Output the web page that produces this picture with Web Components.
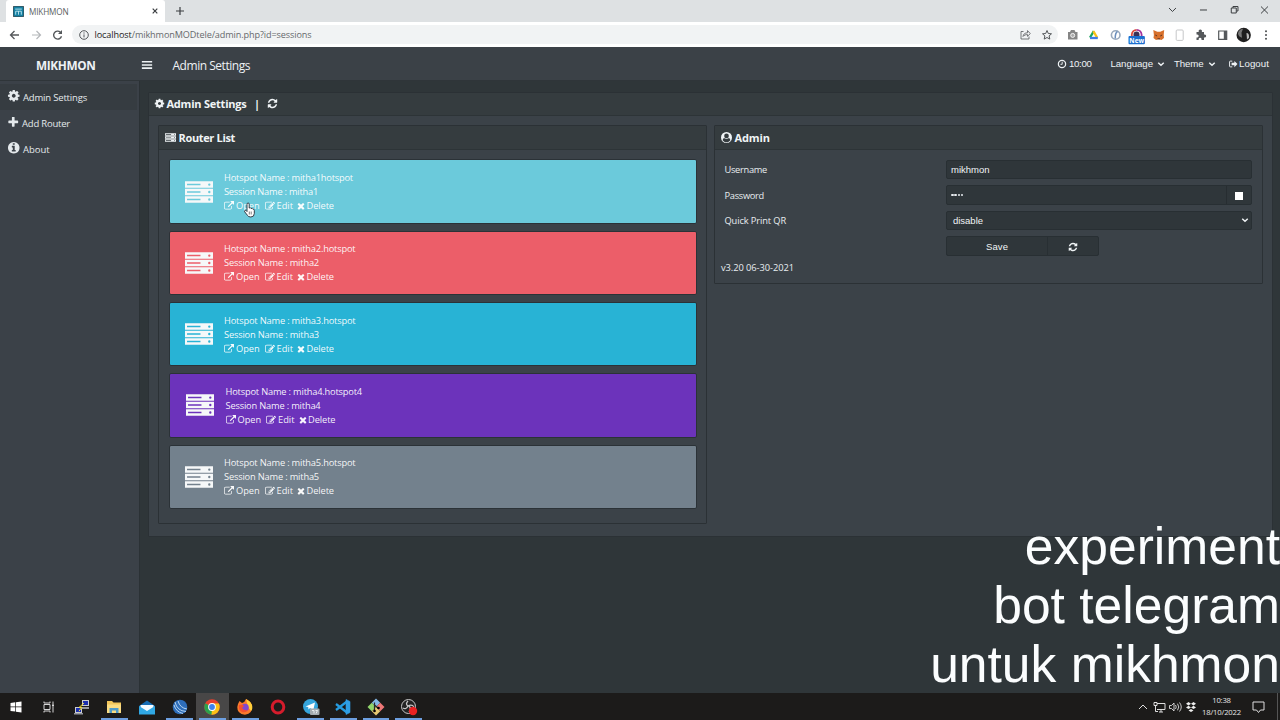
<!DOCTYPE html>
<html lang="en">
<head>
<meta charset="utf-8">
<title>MIKHMON</title>
<style>
  html, body {
    margin: 0;
    width: 1280px;
    height: 720px;
    overflow: hidden;
  }
  body {
    background: #2f3639;
    font-family: "Open Sans", "Noto Sans", sans-serif;
  }
</style>
</head>
<body>
<desktop-screen></desktop-screen>

<script>
const define = (name, html, setup) => {
  const template = document.createElement('template')
  template.innerHTML = html
  window.customElements.define(name, class extends HTMLElement {
    constructor() {
      super()
      this.attachShadow({ mode: 'open' })
      this.shadowRoot.appendChild(template.content.cloneNode(true))
      if (setup) setup.call(this, this.shadowRoot)
    }
  })
}

const icons = {
  bars: '<path d="M128 290h1536v250H128zM128 770h1536v250H128zM128 1250h1536v250H128z"/>',
  cog: '<path d="M1152 896q0-106-75-181t-181-75-181 75-75 181 75 181 181 75 181-75 75-181zm512-109v222q0 12-8 23t-20 13l-185 28q-19 54-39 91 35 50 107 138 10 12 10 25t-9 23q-27 37-99 108t-94 71q-12 0-26-9l-138-108q-44 23-91 38-16 136-29 186-7 28-36 28h-222q-14 0-24.5-8.5t-11.5-21.5l-28-184q-49-16-90-37l-141 107q-10 9-25 9-14 0-25-11-126-114-165-168-7-10-7-23 0-12 8-23 15-21 51-66.5t54-70.5q-27-50-41-99l-183-27q-13-2-21-12.5t-8-23.5v-222q0-12 8-23t19-13l186-28q14-46 39-92-40-57-107-138-10-12-10-24 0-10 9-23 26-36 98.5-107.5t94.5-71.5q13 0 26 10l138 107q44-23 91-38 16-136 29-186 7-28 36-28h222q14 0 24.5 8.5t11.5 21.5l28 184q49 16 90 37l142-107q9-9 24-9 13 0 25 10 129 119 165 170 7 8 7 22 0 12-8 23-15 21-51 66.5t-54 70.5q26 50 41 98l183 28q13 2 21 12.5t8 23.5z"/>',
  plus: '<path d="M1600 736v192q0 40-28 68t-68 28h-416v416q0 40-28 68t-68 28h-192q-40 0-68-28t-28-68v-416h-416q-40 0-68-28t-28-68v-192q0-40 28-68t68-28h416v-416q0-40 28-68t68-28h192q40 0 68 28t28 68v416h416q40 0 68 28t28 68z"/>',
  info: '<path d="M1152 1376v-160q0-14-9-23t-23-9h-96v-512q0-14-9-23t-23-9h-320q-14 0-23 9t-9 23v160q0 14 9 23t23 9h96v320h-96q-14 0-23 9t-9 23v160q0 14 9 23t23 9h448q14 0 23-9t9-23zm-128-896v-160q0-14-9-23t-23-9h-192q-14 0-23 9t-9 23v160q0 14 9 23t23 9h192q14 0 23-9t9-23zm640 416q0 209-103 385.5t-279.5 279.5-385.5 103-385.5-103-279.5-279.5-103-385.5 103-385.5 279.5-279.5 385.5-103 385.5 103 279.5 279.5 103 385.5z"/>',
  refresh: '<path d="M1639 1056q0 5-1 7-64 268-268 434.5t-478 166.5q-146 0-282.5-55t-243.5-157l-129 129q-19 19-45 19t-45-19-19-45v-448q0-26 19-45t45-19h448q26 0 45 19t19 45-19 45l-137 137q71 66 161 102t187 36q134 0 250-65t186-179q11-17 53-117 8-23 30-23h192q13 0 22.5 9.5t9.5 22.5zm25-800v448q0 26-19 45t-45 19h-448q-26 0-45-19t-19-45 19-45l138-138q-148-137-349-137-134 0-250 65t-186 179q-11 17-53 117-8 23-30 23h-199q-13 0-22.5-9.5t-9.5-22.5v-7q65-268 270-434.5t480-166.5q146 0 284 55.5t245 156.5l130-129q19-19 45-19t45 19 19 45z"/>',
  open: '<path d="M1408 928v320q0 119-84.5 203.5t-203.5 84.5h-832q-119 0-203.5-84.5t-84.5-203.5v-832q0-119 84.5-203.5t203.5-84.5h704q14 0 23 9t9 23v64q0 14-9 23t-23 9h-704q-66 0-113 47t-47 113v832q0 66 47 113t113 47h832q66 0 113-47t47-113v-320q0-14 9-23t23-9h64q14 0 23 9t9 23zm384-864v512q0 26-19 45t-45 19-45-19l-176-176-652 652q-10 10-23 10t-23-10l-114-114q-10-10-10-23t10-23l652-652-176-176q-19-19-19-45t19-45 45-19h512q26 0 45 19t19 45z"/>',
  edit: '<path d="M888 1184l116-116-152-152-116 116v56h96v96h56zm440-720q-16-16-33 1l-350 350q-17 17-1 33t33-1l350-350q17-17 1-33zm80 594v190q0 119-84.5 203.5t-203.5 84.5h-832q-119 0-203.5-84.5t-84.5-203.5v-832q0-119 84.5-203.5t203.5-84.5h832q63 0 117 25 15 7 18 23 3 17-9 29l-49 49q-14 14-32 8-23-6-45-6h-832q-66 0-113 47t-47 113v832q0 66 47 113t113 47h832q66 0 113-47t47-113v-126q0-13 9-22l64-64q15-15 35-7t20 29zm-96-738l288 288-672 672h-288v-288zm444 132l-92 92-288-288 92-92q28-28 68-28t68 28l152 152q28 28 28 68t-28 68z"/>',
  times: '<path d="M1490 1322q0 40-28 68l-136 136q-28 28-68 28t-68-28l-294-294-294 294q-28 28-68 28t-68-28l-136-136q-28-28-28-68t28-68l294-294-294-294q-28-28-28-68t28-68l136-136q28-28 68-28t68 28l294 294 294-294q28-28 68-28t68 28l136 136q28 28 28 68t-28 68l-294 294 294 294q28 28 28 68z"/>',
  server: '<path fill-rule="evenodd" d="M0 214h1792v410H0zM130 370v100h860V370zM1480 419a75 75 0 1 0 150 0a75 75 0 1 0 -150 0zM0 691h1792v410H0zM130 847v100h860V847zM1480 896a75 75 0 1 0 150 0a75 75 0 1 0 -150 0zM0 1168h1792v410H0zM130 1323v100h860v-100zM1480 1373a75 75 0 1 0 150 0a75 75 0 1 0 -150 0z"/>',
  clock: '<g fill="none" stroke="currentColor" stroke-width="220"><circle cx="896" cy="896" r="650"/><path d="M930 500v450H620" stroke-width="170"/></g>',
  user: '<path fill-rule="evenodd" d="M0 896a896 896 0 1 0 1792 0a896 896 0 1 0 -1792 0zM1523 1339q-22-155-87.500-257.500t-184.500-118.500q-67 74-159.500 115.500t-195.500 41.500-195.500-41.500-159.500-115.500q-119 16-184.500 118.500t-87.500 257.500q106 150 271 237.500t356 87.500 356-87.500 271-237.500zM512 640a384 384 0 1 0 768 0a384 384 0 1 0 -768 0z"/>',
  logout: '<path d="M768 384H400q-120 0-120 120v784q0 120 120 120h368" fill="none" stroke="currentColor" stroke-width="170"/><path d="M1700 896l-560 560v-340H640V676h500V336z"/>',
  chevron: '<path d="M280 600l616 600 616-600" fill="none" stroke="currentColor" stroke-width="320"/>'
}

const page = {
  // browser strip
  tabs: `
<style>
  :host { display: flex; align-items: flex-start; height: 22px; background: #dee1e3; color: #5c5f62; }
  .tab {
    box-sizing: border-box; width: 159px; height: 22px; margin-left: 6px; padding: 0 6px 0 7px;
    display: flex; align-items: center; background: #fff; border-radius: 3px 3px 0 0;
  }
  .tab text-run { font-size: 8.2px; margin-left: 5px; }
  .tab .close { margin-left: auto; }
  .add { margin: 6px 0 0 10px; }
  .controls { margin-left: auto; display: flex; width: 123px; padding-top: 4px; }
  .controls svg { width: 30.8px; height: 11px; }
  svg { fill: none; stroke: #3b3e41; display: block; }
</style>
<div class="tab">
  <svg width="11" height="11" viewBox="0 0 11 11" stroke="none"><rect width="11" height="11" rx="2" fill="#1680a2"/><path d="M2.200 3.100h6.600M2.700 8.700V5.200h5.600v3.500M5.500 5v3.700" stroke="#bfe8f2" stroke-width=".9"/></svg>
  <text-run width="39.5">MIKHMON</text-run>
  <svg class="close" width="8" height="8" viewBox="0 0 8 8"><path d="M1.7 1.7l4.6 4.6M6.3 1.7L1.7 6.3" stroke-width="1.2"/></svg>
</div>
<svg class="add" width="10" height="10" viewBox="0 0 10 10"><path d="M5 1v8M1 5h8" stroke-width="1.2"/></svg>
<div class="controls">
  <svg viewBox="0 0 30.8 11"><path d="M12 4l3.5 3.5L19 4"/></svg>
  <svg viewBox="0 0 30.8 11"><path d="M12 6h7"/></svg>
  <svg viewBox="0 0 30.8 11"><path d="M12.3 4h5v5h-5zM14 4V2.5h5V7h-1.5"/></svg>
  <svg viewBox="0 0 30.8 11"><path d="M12 2.5l7 7M19 2.5l-7 7"/></svg>
</div>`,

  toolbar: `
<style>
  :host { display: flex; align-items: center; height: 25px; background: #fff; box-sizing: border-box; padding-left: 9px; }
  svg { display: block; flex: none; fill: none; stroke: #55585b; }
  .nav { display: flex; gap: 10.5px; }
  .address {
    display: flex; align-items: center; box-sizing: border-box; width: 986px; height: 19px;
    margin-left: 8.5px; padding: 0 5px 0 7px; border-radius: 10px; background: #f1f3f4;
    font-size: 9.1px; color: #66696c;
  }
  .address b { font-weight: 400; color: #222; }
  .address text-run { margin-left: 6px; }
  .share { margin-left: auto; margin-right: 10px; }
  .ext { display: flex; margin-left: 4.5px; }
  .ext svg { width: 21.4px; height: 20px; }
</style>
<div class="nav">
  <svg width="11" height="12" viewBox="0 0 11 12"><path d="M10 6H1.5M5.5 2L1.5 6l4 4" stroke-width="1.3"/></svg>
  <svg width="11" height="12" viewBox="0 0 11 12"><path d="M1 6h8.500M5.500 2l4 4-4 4" stroke="#b4b7ba" stroke-width="1.200"/></svg>
  <svg width="11" height="12" viewBox="0 0 11 12"><path d="M9.500 7.200A4 4 0 1 1 8.400 3.200" stroke-width="1.400"/><path d="M10 1v4H6z" fill="#55585b" stroke="none"/></svg>
</div>
<div class="address">
  <svg width="10" height="10" viewBox="0 0 10 10"><circle cx="5" cy="5" r="4.300"/><path d="M5 4.400v3M5 2.400v1.200"/></svg>
  <text-run width="217"><b>localhost</b>/mikhmonMODtele/admin.php?id=sessions</text-run>
  <svg class="share" width="11" height="11" viewBox="0 0 11 11"><path d="M3.500 2.500H1v7.500h8V7.500M3 7.500c.3-2.500 2-3.700 4.500-3.700V1.600L10.300 4.600 7.500 7.300V5.600C5.600 5.600 4.200 6 3 7.500z" stroke-width=".8"/></svg>
  <svg width="12" height="12" viewBox="0 0 12 12"><path d="M6 1.500l1.300 3 3.200.3-2.400 2.100.7 3.200L6 8.500l-2.800 1.600.7-3.200L1.500 4.800l3.200-.3z" stroke-width="1"/></svg>
</div>
<div class="ext">
  <svg viewBox="0 0 21.4 20"><path d="M6 7h2l1-2h3.500l1 2h2v7.500H6z" fill="#858585" stroke="none"/><circle cx="10.700" cy="10.400" r="2" fill="#aaa" stroke="#f3f3f3"/></svg>
  <svg viewBox="0 0 21.4 20"><g stroke-width="2.300"><path d="M10.800 6.200L7 12.500" stroke="#19a45b"/><path d="M10.300 6.200l4 6.600" stroke="#fbc116"/><path d="M7 13h7.800" stroke="#3d7de8"/></g></svg>
  <svg viewBox="0 0 21.4 20"><circle cx="10.700" cy="10" r="4.300" stroke="#9aaabd" stroke-width="1.600"/><path d="M12.500 6.500Q10 8 10.300 13.500" stroke="#6b8fbd" stroke-width="1.500"/></svg>
  <svg viewBox="0 0 21.4 20"><path d="M5.800 11V9.500a5 5 0 0 1 4.900-4.600" stroke="#dc4a3c" stroke-width="1.800"/><path d="M10.700 4.900a5 5 0 0 1 4.900 4.600V11" stroke="#a4359c" stroke-width="1.800"/><path d="M7.500 11V9.500a3 3 0 0 1 6 0V11z" fill="#3c3155" stroke="none"/><rect x="2.500" y="11" width="16.400" height="8.300" rx="1" fill="#1b6fd0" stroke="none"/><text x="10.700" y="17.600" font-size="6.500" font-weight="700" font-family="Open Sans" fill="#fff" stroke="none" text-anchor="middle">New</text></svg>
  <svg viewBox="0 0 21.4 20"><path d="M5.300 5l4 1.800h3L16.200 5l-.5 5 .3 3-2.500 2-2.700-.7L8 15l-2.500-2 .4-3z" fill="#d8702b" stroke="none"/><path d="M7.300 10l1.800 1M14.100 10l-1.800 1M9.500 13.800h2.500" stroke="#5a3423"/></svg>
  <svg viewBox="0 0 21.4 20"><rect x="7.200" y="5" width="7" height="10.400" rx="1" stroke="#c5c6c8"/></svg>
  <svg viewBox="0 0 21.4 20"><path d="M6.500 7h2.300a1.700 1.700 0 1 1 3 0H14v2.500a1.600 1.600 0 1 1 0 3V15h-2.600a1.500 1.500 0 1 0-2.600 0H6.500v-2.500a1.600 1.600 0 1 0 0-3z" fill="#55585b" stroke="none"/></svg>
  <svg viewBox="0 0 21.4 20"><path d="M6.700 6h8v8.300h-8z" stroke-width="1.200"/><path d="M11.800 6h3v8.300h-3z" fill="#55585b" stroke="none"/></svg>
  <svg viewBox="0 0 21.4 20"><circle cx="10.700" cy="10" r="7.200" fill="#1f1f1f" stroke="none"/><path d="M5.500 6.500q2-3 4.500-2.800l-1.500 4 .5 5q-3.500-1-4-4z" fill="#777" stroke="none"/><path d="M13.500 8q3 0 2.500 5l-2 1.500z" fill="#bbb" stroke="none"/></svg>
  <svg viewBox="0 0 21.4 20"><g fill="#4a4d50" stroke="none"><circle cx="11" cy="6.300" r="1"/><circle cx="11" cy="10" r="1"/><circle cx="11" cy="13.700" r="1"/></g></svg>
</div>`,

  header: `
<style>
  :host {
    display: flex; align-items: center; box-sizing: border-box; height: 34px; padding: 3px 11px 0 36px;
    background: #3b4147; border-bottom: 1px solid #2f3539; color: #eef2f5; font-size: 12px;
  }
  .brand { font-weight: 700; font-size: 11.8px; }
  .menu { --size: 12px; margin-left: 45px; }
  .title { margin-left: 20px; }
  .right {
    display: flex; align-items: center; margin-left: auto; padding-bottom: 3px;
    font: 9.7px "Liberation Sans", sans-serif;
  }
  .right fa-icon { --size: 10px; }
  .right .pick { margin-left: 19px; }
  .right .pick + fa-icon { --size: 8px; margin-left: 4px; }
</style>
<text-run class="brand" width="59.5">MIKHMON</text-run>
<fa-icon class="menu" name="bars"></fa-icon>
<text-run class="title" width="77.5">Admin Settings</text-run>
<div class="right">
  <fa-icon name="clock"></fa-icon><text-run width="22.5" style="margin-left:2px">10:00</text-run>
  <text-run class="pick" width="42.500">Language</text-run><fa-icon name="chevron"></fa-icon>
  <text-run class="pick" width="29.5" style="margin-left:9px">Theme</text-run><fa-icon name="chevron"></fa-icon>
  <fa-icon name="logout" style="margin-left:12px"></fa-icon><text-run width="30" style="margin-left:1.500px">Logout</text-run>
</div>`,

  sidebar: `
<style>
  :host {
    display: block; box-sizing: border-box; width: 141px; padding-top: 3px;
    background: #3b4148; border-right: 1px solid #2b3135; color: #e4e9ec; font-size: 9.5px;
  }
  .item { display: flex; align-items: center; box-sizing: border-box; height: 26px; padding: 0 0 0 7px; width: 137px; }
  .item.active { background: #363c41; }
  .item fa-icon { --size: 13.500px; margin-top: -2px; }
  .item text-run { margin-left: 2.5px; margin-top: 1.500px; }
</style>
<div class="item active"><fa-icon name="cog"></fa-icon><text-run width="64">Admin Settings</text-run></div>
<div class="item"><fa-icon name="plus" style="--size:12.500px"></fa-icon><text-run width="48">Add Router</text-run></div>
<div class="item"><fa-icon name="info"></fa-icon><text-run width="26.500">About</text-run></div>`,

  card: `
<style>
  :host { display: block; box-sizing: border-box; background: #3b4248; border: 1px solid #2b3135; border-radius: 1px; }
  header {
    display: flex; align-items: center; box-sizing: border-box; height: var(--head, 23.500px);
    padding: 0 0 var(--lift, 0) 5.500px; background: #353c3f; border-bottom: 1px solid #2d3437;
    color: #f0f4f6; font-size: 11px; font-weight: 700;
  }
</style>
<header><slot name="head"></slot></header>
<slot></slot>`,

  router: `
<style>
  :host {
    display: flex; align-items: center; box-sizing: border-box; height: 64.300px; padding-left: 15px;
    border: 1px solid #2b3237; border-radius: 2px; color: rgba(255, 255, 255, .95); font-size: 9.3px;
  }
  .big { --size: 28px; color: #f6f8f9; }
  .text { margin-left: 11.500px; line-height: 14px; padding-top: 1px; }
  .row { display: flex; height: 14px; align-items: center; }
  .row fa-icon { --size: 10px; }
  .row text-run { margin: 0 5px 0 2px; }
</style>
<fa-icon class="big" name="server"></fa-icon>
<div class="text">
  <div class="row name"></div>
  <div class="row session"></div>
  <div class="row">
    <fa-icon name="open"></fa-icon><text-run width="23.500">Open</text-run>
    <fa-icon name="edit"></fa-icon><text-run width="16.500" style="margin-right:3px">Edit</text-run>
    <fa-icon name="times"></fa-icon><text-run width="27.500" style="margin-left:.5px">Delete</text-run>
  </div>
</div>`,

  form: `
<style>
  :host { display: block; padding: 10px 10px 0 9.500px; color: #e8edf0; font-size: 9.3px; }
  .line { display: flex; align-items: center; height: 25.600px; margin-top: -3px; margin-bottom: 3px; }
  .line label { width: 221.500px; flex: none; padding-top: 1px; }
  .field {
    display: flex; align-items: center; box-sizing: border-box; width: 306px; height: 19.500px;
    background: #2f363a; border: 1px solid #282f33; border-radius: 2px; padding-left: 4px;
    font: 9.500px "Liberation Sans", sans-serif; color: #f0f4f6;
  }
  .dots { display: flex; gap: .700px; }
  .dots i { width: 2.600px; height: 2.600px; border-radius: 50%; background: #e8edf0; }
  .check { margin-left: auto; width: 24px; height: 100%; border-left: 1px solid #272d31; display: flex; align-items: center; justify-content: center; }
  .check i { width: 8px; height: 8px; background: #fff; margin-top: 2px; }
  .field fa-icon { --size: 8px; margin-left: auto; margin-right: 2px; }
  .btn { width: 102px; justify-content: center; padding: 0; border-radius: 2px 0 0 2px; }
  .btn.small { width: 52px; margin-left: -1px; border-radius: 0 2px 2px 0; }
  .btn.small fa-icon { --size: 10px; margin: 1px 0 0; }
  .version { margin: -1px 0 0 -3.500px; }
</style>
<div class="line"><label><text-run width="42.500">Username</text-run></label><div class="field"><text-run width="38.500">mikhmon</text-run></div></div>
<div class="line"><label><text-run width="39.500">Password</text-run></label><div class="field"><span class="dots"><i></i><i></i><i></i><i></i></span><span class="check"><i></i></span></div></div>
<div class="line"><label><text-run width="61.500">Quick Print QR</text-run></label><div class="field" style="padding-left:6px"><text-run width="30">disable</text-run><fa-icon name="chevron"></fa-icon></div></div>
<div class="line"><label></label><div class="field btn"><text-run width="22">Save</text-run></div><div class="field btn small"><fa-icon name="refresh"></fa-icon></div></div>
<div class="version"><text-run width="73">v3.20 06-30-2021</text-run></div>`,

  taskbar: `
<style>
  :host { display: flex; height: 27px; background: #1c1b1a; color: #e6e6e6; }
  .app { width: 32.700px; height: 27px; display: flex; align-items: center; justify-content: center; position: relative; }
  .run::after { content: ""; position: absolute; bottom: 0; left: 3px; right: 3px; height: 2px; background: #6d9fe0; }
  .active { background: #484747; }
  svg { display: block; width: 18px; height: 18px; }
  .tray { display: flex; align-items: center; margin-left: auto; }
  .tray svg { width: 16px; height: 14px; fill: none; stroke: #dedede; }
  .clock { display: flex; flex-direction: column; align-items: center; width: 45px; line-height: 12px; font-size: 7.700px; padding-bottom: 1px; }
  .end { width: 1px; height: 27px; background: #555; margin: 0 2px 0 10px; }
</style>
<div class="app"><svg viewBox="0 0 18 18" fill="#fff"><path d="M3.500 5l4.800-.7v4.300H3.500zM9 4.200l5.500-.8v5.200H9zM3.500 9.300h4.800v4.300l-4.800-.7zM9 9.300h5.500v5.200L9 13.700z"/></svg></div>
<div class="app"><svg viewBox="0 0 18 18" fill="none" stroke="#d5d5d5"><path d="M4 6.500h6v5H4zM4 3.500v1.500h6V3.500M4 14.500V13h6v1.500M13 3.500v3M13 9v5.500"/><path d="M12 7.500h2" stroke-width="2"/></svg></div>
<div class="app"><svg viewBox="0 0 18 18"><path d="M9 2h7v6H9zM2 9h7v6H2z" fill="#c9ccd0"/><path d="M10 3h5v4h-5zM3 10h5v4H3z" fill="#1b2faf"/><path d="M8 9h8v2H8zM1 15h9v1.500H1z" fill="#93979d"/><path d="M11 5L6 9.500l3-.3-3 4" stroke="#f4dc2e" fill="none"/></svg></div>
<div class="app run"><svg viewBox="0 0 18 18"><path d="M2 3h5l1.500 1.500H16V15H2z" fill="#f2c65a"/><path d="M2 6.500h14V15H2z" fill="#fbdc82"/><path d="M4.500 10h9v5h-2.500v-2.500H7V15H4.500z" fill="#4f9bc9"/></svg></div>
<div class="app"><svg viewBox="0 0 18 18"><path d="M1 8l8-5.500L17 8v8H1z" fill="#156cb4"/><path d="M2.500 7h13v7h-13z" fill="#f5fbff"/><path d="M1 8l8 5 8-5v8.500H1z" fill="#30a8e4"/></svg></div>
<div class="app run"><svg viewBox="0 0 18 18"><circle cx="9" cy="9" r="7.300" fill="#2d6db9"/><path d="M4 4q2 9 11 9.500M7 3q2 7 9 8M3 7q2 7 9 8.500" fill="none" stroke="#b4d3ef"/></svg></div>
<div class="app run active"><svg viewBox="0 0 18 18"><circle cx="9" cy="9" r="7.700" fill="#e8402f"/><path d="M9 9L2.300 5.200A7.700 7.700 0 0 0 8.500 16.700L12 10.500z" fill="#2ba24c"/><path d="M9 9h7.700A7.700 7.700 0 0 1 8.500 16.700z" fill="#fbc116"/><path d="M9 5.500h6.900a7.700 7.700 0 0 1 .8 3.500H12z" fill="#fbc116"/><circle cx="9" cy="9" r="3.900" fill="#fff"/><circle cx="9" cy="9" r="2.900" fill="#3f82ee"/></svg></div>
<div class="app run"><svg viewBox="0 0 18 18"><path d="M2 6l1.500-3L6 5q3-1 4-4 4 1.500 6 6 1 9-7 9.700Q1 16 1.300 9z" fill="#fa7a2c"/><path d="M10 1q4 2 6 6 1 4-1 6l-3-4z" fill="#ffcf3a"/><circle cx="9" cy="9.500" r="3.800" fill="#8348cf"/><path d="M3 7q4-1 5 1l-2 2q2 3 6 2-2 3-6 2-4-2-3-7z" fill="#f5502e"/></svg></div>
<div class="app"><svg viewBox="0 0 18 18"><ellipse cx="9" cy="9" rx="5.800" ry="6" fill="none" stroke="#d51c2c" stroke-width="3"/></svg></div>
<div class="app run"><svg viewBox="0 0 18 18"><circle cx="8.500" cy="8.500" r="7.500" fill="#36a5dc"/><path d="M3.500 8.500L13 4.500 11.300 12 8 10l-1.500 1.600L6.200 9z" fill="#fff"/><rect x="8" y="10.500" width="9.500" height="6.500" rx="1" fill="#a4abb0"/><path d="M10 12.500h2v3M13.500 12.500h2l-1.500 3" stroke="#e9ecee" fill="none"/></svg></div>
<div class="app run"><svg viewBox="0 0 18 18" fill="none" stroke="#259ce0"><path d="M13 3.500L2 12M13 14.500L2 6" stroke-width="2.300"/><path d="M12 1.500L16 3.500v11L12 16.500z" fill="#2f9fe5" stroke="#2f9fe5" stroke-width=".6"/></svg></div>
<div class="app run"><svg viewBox="0 0 18 18"><g transform="rotate(45 9 9)"><path d="M3 3h6v6H3z" fill="#84b9e5"/><path d="M9 3h6v6H9z" fill="#ee7777"/><path d="M3 9h6v6H3z" fill="#91d56c"/><path d="M9 9h6v6H9z" fill="#e8c971"/></g><path d="M7.500 4.500v8.500M7.500 7l3.500 3" stroke="#2b2b2b" stroke-width="1.200"/><circle cx="7.500" cy="13" r="1.300"/><circle cx="11.500" cy="10" r="1.300"/></svg></div>
<div class="app run"><svg viewBox="0 0 18 18"><circle cx="8.500" cy="8.500" r="7" fill="#242424" stroke="#c7c7c7"/><path d="M8 3q-3 3 0 5 4-2 6 1M8 8q-2 4-5 2M9 8q3 3 0 6" fill="none" stroke="#c7c7c7" stroke-width="1.300"/><circle cx="13" cy="13" r="4.200" fill="#e92222"/></svg></div>
<div class="tray">
  <svg viewBox="0 0 16 14"><path d="M4 9l4-4 4 4"/></svg>
  <svg viewBox="0 0 16 14"><path d="M6 3.500h8v6H6M8 12h4M10 9.500v2.500M3 2.500h3v3H3zM4.500 5.500v6H7"/></svg>
  <svg viewBox="0 0 16 14"><path d="M2.500 5.500h2l2.500-2.500v8L4.500 8.500h-2zM8.500 5q1.500 2 0 4M10.500 3.700q2.500 3.300 0 6.600M12.500 2.500q3.500 4.500 0 9" stroke-width=".9"/></svg>
  <svg viewBox="0 0 16 14"><path d="M5.500 2L8 3.700 5.500 5.400 3 3.700zM10.500 2L13 3.700l-2.500 1.700L8 3.700zM5.500 5.700L8 7.400 5.500 9 3 7.400zM10.500 5.700L13 7.400 10.500 9 8 7.400zM8 9l2.500 1.500L8 12l-2.500-1.500z" fill="#eee" stroke="none"/></svg>
  <div class="clock"><text-run width="18.500">10:38</text-run><text-run width="39">18/10/2022</text-run></div>
  <svg viewBox="0 0 16 14" style="margin-left:6px;width:17px"><path d="M2.500 2h11v8H10l-2 2.500L6 10H2.500z"/></svg>
  <span class="end"></span>
</div>`,

  screen: `
<style>
  :host { display: flex; flex-direction: column; width: 1280px; height: 720px; position: relative; overflow: hidden; }
  .view { display: flex; flex: 1; min-height: 0; }
  main { flex: 1; padding: 11px 7px 0 7.500px; }
  .outer { height: 445px; --head: 23px; --lift: 2px; }
  .cols { display: flex; align-items: flex-start; gap: 7px; padding: 9px 9px 0 9.500px; }
  .routers, .admin { --head: 23.500px; --lift: 0px; }
  .routers { width: 549px; height: 399px; }
  .admin { width: 549px; height: 159px; }
  .list { display: flex; flex-direction: column; gap: 7px; padding: 9.900px 9.500px 0 9.500px; }
  .head { display: flex; align-items: center; }
  .head fa-icon { --size: 11px; }
  .caption {
    position: absolute; right: 0; top: 516.500px; text-align: right; color: #fbfdfe;
    font: 51.600px/59.300px "Liberation Sans", sans-serif;
  }
  .hand { position: absolute; left: 243px; top: 202px; }
</style>
<browser-tabs></browser-tabs>
<browser-toolbar></browser-toolbar>
<app-header></app-header>
<div class="view">
  <app-sidebar></app-sidebar>
  <main>
    <panel-card class="outer">
      <div slot="head" class="head"><fa-icon name="cog"></fa-icon><text-run width="80" style="margin-left:1.500px">Admin Settings</text-run><span style="margin:0 7px 0 7.500px">|</span><fa-icon name="refresh"></fa-icon></div>
      <div class="cols">
        <panel-card class="routers">
          <div slot="head" class="head"><fa-icon name="server"></fa-icon><text-run width="56.5" style="margin-left:3px">Router List</text-run></div>
          <div class="list">
            <router-box label="mitha1hotspot" session="mitha1" fit="129 94" color="#6bcadb"></router-box>
            <router-box label="mitha2.hotspot" session="mitha2" fit="131.5 95" color="#ec5e69"></router-box>
            <router-box label="mitha3.hotspot" session="mitha3" fit="131.5 95" color="#28b3d5"></router-box>
            <router-box label="mitha4.hotspot4" session="mitha4" fit="136.5 95" color="#6c33bb" style="padding-left:16.500px"></router-box>
            <router-box label="mitha5.hotspot" session="mitha5" fit="131.5 95" color="#73818d"></router-box>
          </div>
        </panel-card>
        <panel-card class="admin">
          <div slot="head" class="head"><fa-icon name="user"></fa-icon><text-run width="35.5" style="margin-left:3px">Admin</text-run></div>
          <admin-form></admin-form>
        </panel-card>
      </div>
    </panel-card>
  </main>
</div>
<task-bar></task-bar>
<div class="caption">experiment<br>bot telegram<br>untuk mikhmon</div>
<svg class="hand" width="13" height="16" viewBox="0 0 13 16"><path d="M4 9.500V2.300q0-1.300 1.100-1.300t1.100 1.300V6q1.500-.6 1.900.5 1.300-.5 1.700.6 1.500-.3 1.500 1.200v3.200q0 3.500-3.500 3.500-2.500 0-3.500-1.800L1.700 9.800q-.6-1.200.5-1.500 1 0 1.800 1.200z" fill="#fff" stroke="#222a35" stroke-width=".9"/><path d="M6.300 9.500v3M8.200 9.500v3" stroke="#444" stroke-width=".7"/></svg>`
}

define('browser-tabs', page.tabs)
define('browser-toolbar', page.toolbar)
define('app-header', page.header)
define('app-sidebar', page.sidebar)
define('panel-card', page.card)
define('admin-form', page.form)
define('task-bar', page.taskbar)
define('router-box', page.router, function (root) {
  const [nameWidth, sessionWidth] = this.getAttribute('fit').split(' ')
  this.style.background = this.getAttribute('color')
  root.querySelector('.name').innerHTML = `<text-run width="${nameWidth}" style="margin:0">Hotspot Name : ${this.getAttribute('label')}</text-run>`
  root.querySelector('.session').innerHTML = `<text-run width="${sessionWidth}" style="margin:0">Session Name : ${this.getAttribute('session')}</text-run>`
})
define('desktop-screen', page.screen)

define('fa-icon', `
<style>
  :host { display: inline-block; flex: none; width: var(--size, 10px); height: var(--size, 10px); }
  svg { display: block; width: 100%; height: 100%; fill: currentColor; overflow: visible; }
</style>
<svg viewBox="0 0 1792 1792"></svg>`, function (root) {
  root.querySelector('svg').innerHTML = icons[this.getAttribute('name')]
})

// one line of text, tracked so that it is as long as its width attribute
class TextRun extends HTMLElement {
  constructor() {
    super()
    this.attachShadow({ mode: 'open' })
    this.shadowRoot.innerHTML = '<style>:host { display: inline-block; flex: none; white-space: pre; }</style><slot></slot>'
  }

  connectedCallback() {
    const width = Number(this.getAttribute('width'))
    const natural = this.getBoundingClientRect().width
    this.style.letterSpacing = (width - natural) / this.textContent.length + 'px'
  }
}

window.customElements.define('text-run', TextRun)
</script>
</body>
</html>
